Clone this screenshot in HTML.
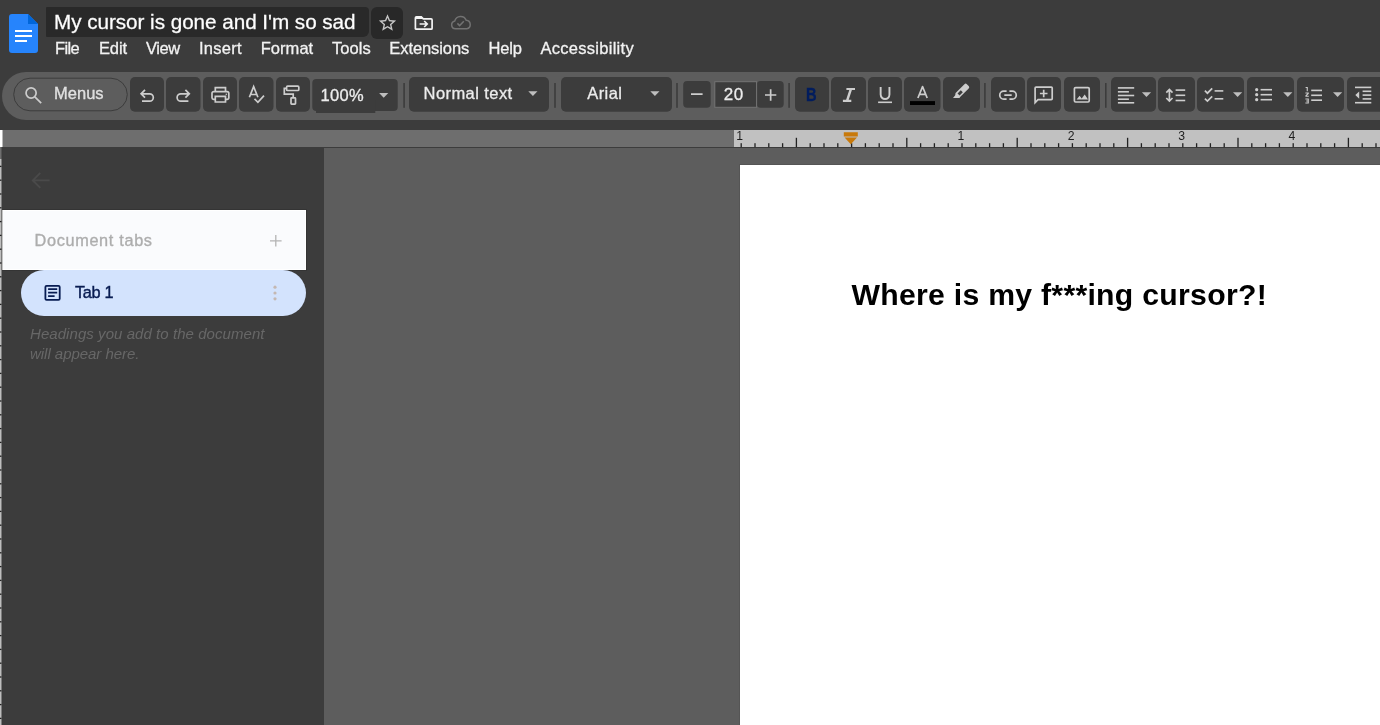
<!DOCTYPE html>
<html>
<head>
<meta charset="utf-8">
<title>My cursor is gone and I'm so sad - Docs</title>
<style>
*{box-sizing:border-box;margin:0;padding:0}
html,body{width:1380px;height:725px;overflow:hidden;background:#3c3c3c;font-family:"Liberation Sans",sans-serif;}
.abs{position:absolute}
#logo{left:9px;top:14px;width:29px;height:39px}
#title{left:46px;top:7px;width:323px;height:30px;background:#292929;border-radius:1px 4px 6px 1px}
#starbox{left:371px;top:7px;width:32px;height:32px;background:#282828;border-radius:6px}
#rulerbg{left:0;top:130px;width:1380px;height:18px;background:#6e6e6e}
#ruler{left:734px;top:130px;width:646px;height:17px;background:#c1c1c1}
#rulerline{left:0;top:147px;width:1380px;height:1px;background:#3c3c3c}
#canvas{left:324px;top:148px;width:1056px;height:577px;background:#5d5d5d}
#side{left:2px;top:148px;width:322px;height:577px;background:#3c3c3c}
#page{left:740px;top:165px;width:640px;height:560px;background:#fff;box-shadow:0 0 0 1px #555}
#dtabs{left:2px;top:210px;width:304px;height:60px;background:#fafbfd;border:1px solid #fff;box-shadow:0 0 0 1px #343434}
#tab1{left:21px;top:270px;width:285px;height:46px;border-radius:23px;background:#d3e3fd}
</style>
</head>
<body>
<!-- header -->
<svg id="logo" class="abs" viewBox="0 0 29 39"><path d="M3 0h16l10 10v26a3 3 0 0 1-3 3H3a3 3 0 0 1-3-3V3a3 3 0 0 1 3-3z" fill="#2684fc"/><path d="M19 0l10 10h-10z" fill="#0066da"/><rect x="6" y="16" width="17" height="2" fill="#fff"/><rect x="6" y="21" width="17" height="2" fill="#fff"/><rect x="6" y="26" width="12" height="2" fill="#fff"/></svg>
<div id="title" class="abs"></div>
<div id="starbox" class="abs"></div>
<!-- toolbar -->

<!-- ruler -->
<div id="rulerbg" class="abs"></div>
<div id="ruler" class="abs"></div>
<div id="rulerline" class="abs"></div>
<!-- main -->
<div id="canvas" class="abs"></div>
<div id="side" class="abs"></div>
<div id="page" class="abs"></div>
<div id="dtabs" class="abs"></div>
<div id="tab1" class="abs"></div>
<svg class="abs" style="left:0;top:0;will-change:transform" width="1380" height="725" viewBox="0 0 1380 725">
<!-- toolbar pill -->
<rect x="2" y="72" width="1420" height="48" rx="24" fill="#5d5d5d"/>
<rect x="13.7" y="78.2" width="113.6" height="32.6" rx="16.3" fill="#5d5d5d" stroke="#3c3c3c" stroke-width="1"/>
<g fill="#3c3c3c">
<rect x="130" y="77" width="34" height="34.7" rx="5"/>
<rect x="166" y="77" width="34.5" height="34.7" rx="5"/>
<rect x="203" y="77" width="34" height="34.7" rx="5"/>
<rect x="239" y="77" width="34.5" height="34.7" rx="5"/>
<rect x="276" y="77" width="34" height="34.7" rx="5"/>
<rect x="409" y="77" width="140" height="34.7" rx="5"/>
<rect x="561" y="77" width="111" height="34.7" rx="5"/>
<rect x="795" y="77" width="34" height="34.7" rx="5"/>
<rect x="831" y="77" width="35" height="34.7" rx="5"/>
<rect x="868" y="77" width="34" height="34.7" rx="5"/>
<rect x="904" y="77" width="36.5" height="34.7" rx="5"/>
<rect x="943" y="77" width="37" height="34.7" rx="5"/>
<rect x="991" y="77" width="34" height="34.7" rx="5"/>
<rect x="1027" y="77" width="34" height="34.7" rx="5"/>
<rect x="1064" y="77" width="36" height="34.7" rx="5"/>
<rect x="1111" y="77" width="45" height="34.7" rx="5"/>
<rect x="1158" y="77" width="37" height="34.7" rx="5"/>
<rect x="1197" y="77" width="47" height="34.7" rx="5"/>
<rect x="1247" y="77" width="47" height="34.7" rx="5"/>
<rect x="1297" y="77" width="47" height="34.7" rx="5"/>
<rect x="1347" y="77" width="38" height="34.7" rx="5"/>
<rect x="312.3" y="79" width="85.4" height="32" rx="4"/>
<rect x="316" y="100" width="59.3" height="13"/>
<rect x="683.2" y="81" width="27.5" height="26.7" rx="4"/>
<rect x="756.7" y="81" width="27" height="26.7" rx="4"/>
<rect x="403.3" y="83" width="1.6" height="24.8"/>
<rect x="554.2" y="83" width="1.6" height="24.8"/>
<rect x="676.2" y="83" width="1.6" height="24.8"/>
<rect x="788.3" y="83" width="1.6" height="24.8"/>
<rect x="984.1" y="83" width="1.6" height="24.8"/>
<rect x="1105" y="83" width="1.6" height="24.8"/>
</g>
<rect x="714.8" y="81.7" width="41.8" height="25.6" fill="#3c3c3c" stroke="#747474" stroke-width="1"/>
<g fill="none" stroke="#cdcdcd" stroke-width="1.7">
<circle cx="31.1" cy="93" r="5.05"/><path d="M34.8 96.8L41.2 103.1"/>
<path d="M145 89.9L141.1 93.8L145 97.7M141.3 93.8H149.6a3.7 3.7 0 0 1 0 7.4H142"/>
<path d="M185.4 89.9L189.3 93.8L185.4 97.7M189.1 93.8H180.8a3.7 3.7 0 0 0 0 7.4H188.4"/>
<path d="M215.3 91.5V87.6H225.5V91.5M215.3 99.3H213.6a1.6 1.6 0 0 1-1.6-1.6V93.3a1.7 1.7 0 0 1 1.7-1.7H227.1a1.7 1.7 0 0 1 1.7 1.7V97.7a1.6 1.6 0 0 1-1.6 1.6H225.5M215.3 96.4H225.5V102H215.3z"/>
<path d="M249.4 97.3L253.65 86.6L257.9 97.3M250.9 94.5H256.4M254.5 98.9L257.9 102.3L264 95.7"/>
<rect x="286.6" y="86.2" width="12.2" height="4.3" rx="1"/><path d="M286.6 88.3H284.3V94.2H293.2V97.6"/><rect x="291" y="97.9" width="4.5" height="6.3" rx="0.6"/>
<path d="M1006.6 91.2H1003.7a3.95 3.95 0 0 0 0 7.9H1006.6M1009.4 91.2H1012.3a3.95 3.95 0 0 1 0 7.9H1009.4M1004.3 95.15H1011.7"/>
<path d="M1035.1 102.6V88a0.9 0.9 0 0 1 0.9-0.9H1051.3a0.9 0.9 0 0 1 0.9 0.9V98.8a0.9 0.9 0 0 1-0.9 0.9H1038zM1043.7 89.7V97.3M1039.9 93.5H1047.5"/>
<rect x="1074.4" y="87.6" width="14.8" height="14.4" rx="1.2"/>
<path d="M691 94.2H702.6M765 95H776.3M770.65 89.3V100.7"/>
<path d="M1169.4 89.6V101M1166.3 92.6L1169.4 89.5L1172.5 92.6M1166.3 98L1169.4 101.1L1172.5 98"/>
<path d="M1204.9 90.7L1207.4 93.2L1212.2 88.4M1204.9 98.6L1207.4 101.1L1212.2 96.3"/>
</g>
<g fill="#cdcdcd">
<circle cx="226.3" cy="94.2" r="0.8"/>
<path d="M1076.6 99.6L1079.6 95.8L1081.7 98.4L1084.7 94.6L1088 99.6z"/>
<path d="M953 97.9L956.2 94L959.9 97.5L959.5 97.9z"/><g transform="translate(962.4 90.5) rotate(-45)"><rect x="-8" y="-3" width="15.6" height="6" rx="1.7"/><rect x="-5.6" y="-1.3" width="4.6" height="2.9" fill="#3c3c3c"/></g>
<path d="M379.1 93.1h9.2l-4.6 4.7z" fill="#bebebe"/>
<path d="M528.3 91.2h9.2l-4.6 4.7z" fill="#bebebe"/>
<path d="M650.3 91.2h9.2l-4.6 4.7z" fill="#bebebe"/>
<path d="M1141.9 92.2h9.2l-4.6 4.7z" fill="#bebebe"/>
<path d="M1233 92.2h9.2l-4.6 4.7z" fill="#bebebe"/>
<path d="M1283.2 92.2h9.2l-4.6 4.7z" fill="#bebebe"/>
<path d="M1333 92.2h9.2l-4.6 4.7z" fill="#bebebe"/>
<rect x="1117.9" y="87.1" width="16.3" height="1.6"/>
<rect x="1117.9" y="91" width="11" height="1.6"/>
<rect x="1117.9" y="94.7" width="16.3" height="1.6"/>
<rect x="1117.9" y="98.4" width="11" height="1.6"/>
<rect x="1117.9" y="102" width="16.3" height="1.6"/>
<rect x="1175.6" y="89.3" width="9.6" height="1.6"/>
<rect x="1175.6" y="94.5" width="9.6" height="1.6"/>
<rect x="1175.6" y="99.7" width="9.6" height="1.6"/>
<rect x="1214.6" y="90.1" width="8.7" height="1.6"/>
<rect x="1214.6" y="98" width="8.7" height="1.6"/>
<circle cx="1256.7" cy="89.7" r="1.6"/><rect x="1260.6" y="88.9" width="11.4" height="1.6"/>
<circle cx="1256.7" cy="94.7" r="1.6"/><rect x="1260.6" y="93.9" width="11.4" height="1.6"/>
<circle cx="1256.7" cy="99.7" r="1.6"/><rect x="1260.6" y="98.9" width="11.4" height="1.6"/>
<rect x="1311.2" y="89.60000000000001" width="10.8" height="1.6"/>
<rect x="1311.2" y="94.5" width="10.8" height="1.6"/>
<rect x="1311.2" y="99.4" width="10.8" height="1.6"/>
<path d="M1305.6 87h2.2v4.3h-1.1v-3.2h-1.1zM1305.4 92.6h3.4v1.2l-2 1.9h2v1h-3.4v-1.1l2-2h-2zM1305.4 98.6h3.4v5h-3.4v-1h2.3v-1h-1.5v-1h1.5v-1h-2.3z"/>
<rect x="1355" y="86.6" width="16.3" height="1.6"/><rect x="1355" y="101.9" width="16.3" height="1.6"/>
<rect x="1362.6" y="90.5" width="8.7" height="1.6"/>
<rect x="1362.6" y="94.3" width="8.7" height="1.6"/>
<rect x="1362.6" y="98.1" width="8.7" height="1.6"/>
<path d="M1359.2 91.4V98.8L1355.3 95.1z"/>
<path d="M846.4 87.9H855V90.1H851.9L848.7 99.8H851.3V102H842.9V99.8H846.1L849.3 90.1H846.4z"/>
<rect x="878.1" y="101.5" width="13.9" height="1.6"/>
</g>
<rect x="910" y="101.1" width="25" height="3.9" fill="#000"/>
<g font-family="Liberation Sans, sans-serif" font-size="16.5" fill="#ececec" stroke="#ececec" stroke-width="0.3">
<text x="54" y="99" textLength="49.6" fill="#dcdcdc">Menus</text>
<text x="320.6" y="101" textLength="43">100%</text>
<text x="423.6" y="98.8" textLength="88.6">Normal text</text>
<text x="587.3" y="99" textLength="34.6">Arial</text>
<text x="723.7" y="100.2" textLength="19.6" font-size="17">20</text>
<text x="806" y="100.5" font-size="17.8" font-weight="bold" fill="#021d5e" stroke="#021d5e" textLength="10.6" lengthAdjust="spacingAndGlyphs">B</text>
<path d="M880.65 87V94.6a4.4 4.4 0 0 0 8.8 0V87" fill="none" stroke="#cdcdcd" stroke-width="1.9"/>
<path d="M917.9 98L922.55 86.6L927.2 98M919.7 94.4H925.4" fill="none" stroke="#cdcdcd" stroke-width="1.7" stroke-linejoin="round"/>
</g>
<!-- RULER -->
<g fill="#222"><rect x="740.55" y="143.2" width="1.3" height="4"/><rect x="754.35" y="143.2" width="1.3" height="4"/><rect x="768.15" y="143.2" width="1.3" height="4"/><rect x="781.95" y="143.2" width="1.3" height="4"/><rect x="795.75" y="137.8" width="1.3" height="9.4"/><rect x="809.55" y="143.2" width="1.3" height="4"/><rect x="823.35" y="143.2" width="1.3" height="4"/><rect x="837.15" y="143.2" width="1.3" height="4"/><rect x="850.95" y="143.2" width="1.3" height="4"/><rect x="864.75" y="143.2" width="1.3" height="4"/><rect x="878.55" y="143.2" width="1.3" height="4"/><rect x="892.35" y="143.2" width="1.3" height="4"/><rect x="906.15" y="137.8" width="1.3" height="9.4"/><rect x="919.95" y="143.2" width="1.3" height="4"/><rect x="933.75" y="143.2" width="1.3" height="4"/><rect x="947.55" y="143.2" width="1.3" height="4"/><rect x="961.35" y="143.2" width="1.3" height="4"/><rect x="975.15" y="143.2" width="1.3" height="4"/><rect x="988.95" y="143.2" width="1.3" height="4"/><rect x="1002.75" y="143.2" width="1.3" height="4"/><rect x="1016.55" y="137.8" width="1.3" height="9.4"/><rect x="1030.35" y="143.2" width="1.3" height="4"/><rect x="1044.15" y="143.2" width="1.3" height="4"/><rect x="1057.95" y="143.2" width="1.3" height="4"/><rect x="1071.75" y="143.2" width="1.3" height="4"/><rect x="1085.55" y="143.2" width="1.3" height="4"/><rect x="1099.35" y="143.2" width="1.3" height="4"/><rect x="1113.15" y="143.2" width="1.3" height="4"/><rect x="1126.95" y="137.8" width="1.3" height="9.4"/><rect x="1140.75" y="143.2" width="1.3" height="4"/><rect x="1154.55" y="143.2" width="1.3" height="4"/><rect x="1168.35" y="143.2" width="1.3" height="4"/><rect x="1182.15" y="143.2" width="1.3" height="4"/><rect x="1195.95" y="143.2" width="1.3" height="4"/><rect x="1209.75" y="143.2" width="1.3" height="4"/><rect x="1223.55" y="143.2" width="1.3" height="4"/><rect x="1237.35" y="137.8" width="1.3" height="9.4"/><rect x="1251.15" y="143.2" width="1.3" height="4"/><rect x="1264.95" y="143.2" width="1.3" height="4"/><rect x="1278.75" y="143.2" width="1.3" height="4"/><rect x="1292.55" y="143.2" width="1.3" height="4"/><rect x="1306.35" y="143.2" width="1.3" height="4"/><rect x="1320.15" y="143.2" width="1.3" height="4"/><rect x="1333.95" y="143.2" width="1.3" height="4"/><rect x="1347.75" y="137.8" width="1.3" height="9.4"/><rect x="1361.55" y="143.2" width="1.3" height="4"/><rect x="1375.35" y="143.2" width="1.3" height="4"/></g>
<g font-family="Liberation Sans, sans-serif" font-size="12.2" fill="#1e1e1e">
<text x="736.2" y="140">1</text>
<text x="957.4" y="140">1</text>
<text x="1067.8" y="140">2</text>
<text x="1178.3" y="140">3</text>
<text x="1288.6" y="140">4</text>
</g>
<path d="M843.8 132.3H857.8V136.6H843.8zM844.6 137.6H857L850.8 144.2z" fill="#c8790a"/>
<!-- HEADER ICONS -->
<path transform="translate(377.15 12.6) scale(0.8625)" d="M22 9.24l-7.19-.62L12 2 9.19 8.63 2 9.24l5.46 4.73L5.82 21 12 17.27 18.18 21l-1.63-7.03L22 9.24zM12 15.4l-3.76 2.27 1-4.28-3.32-2.88 4.38-.38L12 6.1l1.71 4.04 4.38.38-3.32 2.88 1 4.28L12 15.4z" fill="#c6c6c6"/>
<path d="M415.4 29.2V17.9a1 1 0 0 1 1-1H421.3L423.3 18.9H431.1a1 1 0 0 1 1 1V28.2a1 1 0 0 1-1 1H416.4a1 1 0 0 1-1-1z" fill="none" stroke="#f4f4f4" stroke-width="1.7"/><path d="M415.4 17h6l2 2h-8z" fill="#f4f4f4"/><path d="M419.6 24H426.8M424.2 21L427.2 24L424.2 27" fill="none" stroke="#f4f4f4" stroke-width="1.7"/>
<path d="M455.4 28.8a4 4 0 0 1-0.6-7.9a6 6 0 0 1 11.4-0.6a4.3 4.3 0 0 1 0.6 8.5z" fill="none" stroke="#727272" stroke-width="1.5"/><path d="M457.4 23.4L459.6 25.6L463.8 21.2" fill="none" stroke="#727272" stroke-width="1.5"/>
<!-- SIDEBAR -->
<path d="M49.6 180.4H33M40.3 172.9L32.8 180.4L40.3 187.9" fill="none" stroke="#4a4a4a" stroke-width="1.9"/>
<path d="M270 240.8H281.6M275.8 235.1V246.6" fill="none" stroke="#b4b4b4" stroke-width="1.3"/>
<rect x="45.4" y="285.8" width="14.3" height="14.1" rx="1.2" fill="none" stroke="#081c52" stroke-width="1.8"/><path d="M48.1 289.1H57.2M48.1 292.6H57.2M48.1 296.1H54.6" fill="none" stroke="#081c52" stroke-width="1.7"/>
<g fill="#c4b8b2"><circle cx="275" cy="287.2" r="1.6"/><circle cx="275" cy="293" r="1.6"/><circle cx="275" cy="298.8" r="1.6"/></g>
<g font-family="Liberation Sans, sans-serif">
<text x="34.5" y="246" font-size="16.3" fill="#adadad" textLength="117.5" stroke="#adadad" stroke-width="0.35">Document tabs</text>
<text x="75" y="298" font-size="16.3" fill="#081c52" textLength="38.6" stroke="#081c52" stroke-width="0.4">Tab 1</text>
<text x="30" y="339" font-size="15" font-style="italic" fill="#676767" textLength="234.5">Headings you add to the document</text>
<text x="30" y="358.8" font-size="15" font-style="italic" fill="#676767" textLength="109.5">will appear here.</text>
<text x="851.4" y="305" font-size="30.2" font-weight="bold" fill="#000" textLength="415.3">Where is my f***ing cursor?!</text>
</g>
<!-- HEADER TEXT -->
<g font-family="Liberation Sans, sans-serif" fill="#f2f2f2" stroke="#f2f2f2" stroke-width="0.3">
<text id="ttl" x="54" y="29" font-size="20.7" fill="#ffffff" textLength="301.6">My cursor is gone and I'm so sad</text>
<text class="mn" x="55.0" y="53.8" font-size="16.5" textLength="24.7">File</text>
<text class="mn" x="98.9" y="53.8" font-size="16.5" textLength="28.3">Edit</text>
<text class="mn" x="146.0" y="53.8" font-size="16.5" textLength="34.1">View</text>
<text class="mn" x="199.0" y="53.8" font-size="16.5" textLength="42.7">Insert</text>
<text class="mn" x="260.7" y="53.8" font-size="16.5" textLength="52.5">Format</text>
<text class="mn" x="332.0" y="53.8" font-size="16.5" textLength="38.7">Tools</text>
<text class="mn" x="389.3" y="53.8" font-size="16.5" textLength="80.0">Extensions</text>
<text class="mn" x="488.6" y="53.8" font-size="16.5" textLength="33.4">Help</text>
<text class="mn" x="540.4" y="53.8" font-size="16.5" textLength="93.3">Accessibility</text>
</g>
<!-- LEFT STRIP -->
<rect x="1.4" y="148" width="0.9" height="577" fill="#3c3c3c"/>
<rect x="0" y="130" width="2.5" height="17" fill="#fff"/>
<rect x="0" y="147" width="1.5" height="12" fill="#6e6e6e"/>
<rect x="0" y="159" width="1.5" height="566" fill="#bebebe"/>
<g fill="#222"><rect x="0" y="165.75" width="1.5" height="1.3"/><rect x="0" y="179.55" width="1.5" height="1.3"/><rect x="0" y="193.35" width="1.5" height="1.3"/><rect x="0" y="207.15" width="1.5" height="1.3"/><rect x="0" y="220.95" width="1.5" height="1.3"/><rect x="0" y="234.75" width="1.5" height="1.3"/><rect x="0" y="248.55" width="1.5" height="1.3"/><rect x="0" y="262.35" width="1.5" height="1.3"/><rect x="0" y="276.15" width="1.5" height="1.3"/><rect x="0" y="289.95" width="1.5" height="1.3"/><rect x="0" y="303.75" width="1.5" height="1.3"/><rect x="0" y="317.55" width="1.5" height="1.3"/><rect x="0" y="331.35" width="1.5" height="1.3"/><rect x="0" y="345.15" width="1.5" height="1.3"/><rect x="0" y="358.95" width="1.5" height="1.3"/><rect x="0" y="372.75" width="1.5" height="1.3"/><rect x="0" y="386.55" width="1.5" height="1.3"/><rect x="0" y="400.35" width="1.5" height="1.3"/><rect x="0" y="414.15" width="1.5" height="1.3"/><rect x="0" y="427.95" width="1.5" height="1.3"/><rect x="0" y="441.75" width="1.5" height="1.3"/><rect x="0" y="455.55" width="1.5" height="1.3"/><rect x="0" y="469.35" width="1.5" height="1.3"/><rect x="0" y="483.15" width="1.5" height="1.3"/><rect x="0" y="496.95" width="1.5" height="1.3"/><rect x="0" y="510.75" width="1.5" height="1.3"/><rect x="0" y="524.55" width="1.5" height="1.3"/><rect x="0" y="538.35" width="1.5" height="1.3"/><rect x="0" y="552.15" width="1.5" height="1.3"/><rect x="0" y="565.95" width="1.5" height="1.3"/><rect x="0" y="579.75" width="1.5" height="1.3"/><rect x="0" y="593.55" width="1.5" height="1.3"/><rect x="0" y="607.35" width="1.5" height="1.3"/><rect x="0" y="621.15" width="1.5" height="1.3"/><rect x="0" y="634.95" width="1.5" height="1.3"/><rect x="0" y="648.75" width="1.5" height="1.3"/><rect x="0" y="662.55" width="1.5" height="1.3"/><rect x="0" y="676.35" width="1.5" height="1.3"/><rect x="0" y="690.15" width="1.5" height="1.3"/><rect x="0" y="703.95" width="1.5" height="1.3"/><rect x="0" y="717.75" width="1.5" height="1.3"/></g>
</svg>
</body>
</html>
